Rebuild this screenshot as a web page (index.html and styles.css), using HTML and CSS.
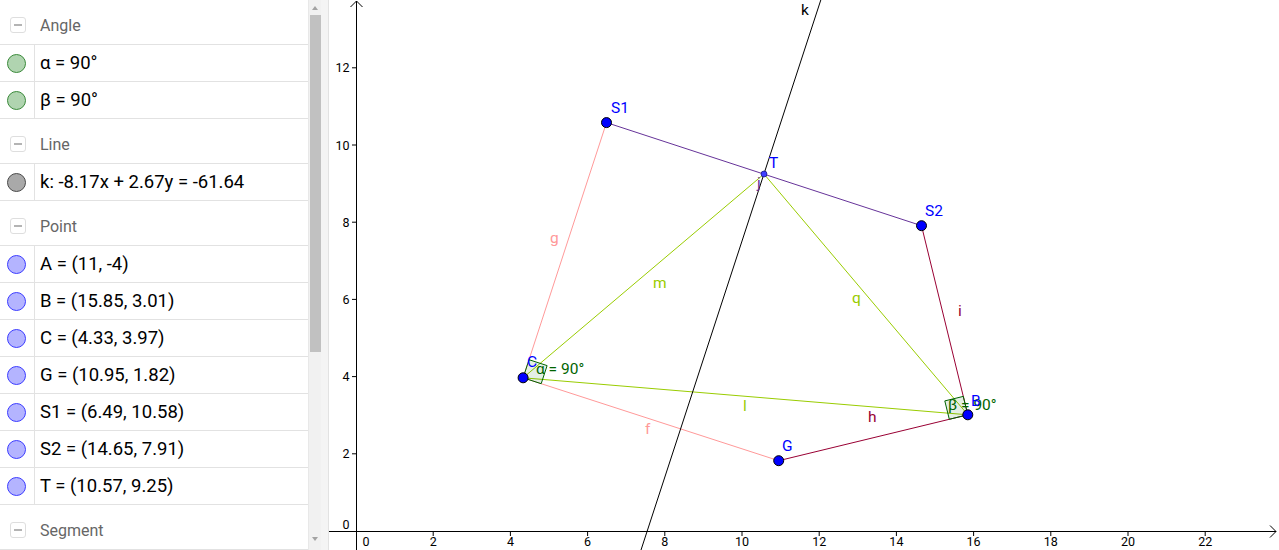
FILE: index.html
```html
<!DOCTYPE html>
<html lang="en">
<head>
<meta charset="utf-8">
<title>Algebra and Graphics</title>
<link rel="stylesheet" href="styles.css">
</head>
<body>
<div class="app">
  <div class="algebra">
    <div class="list">
      <div class="group-head"><span class="toggle"></span><span class="gtitle">Angle</span></div>
      <div class="item"><div class="marker"><span class="dot dot-green"></span></div><div class="expr">α = 90°</div></div>
      <div class="item"><div class="marker"><span class="dot dot-green"></span></div><div class="expr">β = 90°</div></div>
      <div class="group-head"><span class="toggle"></span><span class="gtitle">Line</span></div>
      <div class="item"><div class="marker"><span class="dot dot-gray"></span></div><div class="expr">k: -8.17x + 2.67y = -61.64</div></div>
      <div class="group-head"><span class="toggle"></span><span class="gtitle">Point</span></div>
      <div class="item"><div class="marker"><span class="dot dot-blue"></span></div><div class="expr">A = (11, -4)</div></div>
      <div class="item"><div class="marker"><span class="dot dot-blue"></span></div><div class="expr">B = (15.85, 3.01)</div></div>
      <div class="item"><div class="marker"><span class="dot dot-blue"></span></div><div class="expr">C = (4.33, 3.97)</div></div>
      <div class="item"><div class="marker"><span class="dot dot-blue"></span></div><div class="expr">G = (10.95, 1.82)</div></div>
      <div class="item"><div class="marker"><span class="dot dot-blue"></span></div><div class="expr">S1 = (6.49, 10.58)</div></div>
      <div class="item"><div class="marker"><span class="dot dot-blue"></span></div><div class="expr">S2 = (14.65, 7.91)</div></div>
      <div class="item"><div class="marker"><span class="dot dot-blue"></span></div><div class="expr">T = (10.57, 9.25)</div></div>
      <div class="group-head"><span class="toggle"></span><span class="gtitle">Segment</span></div>
    </div>
    <div class="scrollbar">
      <div class="sb-btn sb-btn-up"><span class="tri-up"></span></div>
      <div class="sb-track"><div class="sb-thumb"></div></div>
      <div class="sb-btn sb-btn-down"><span class="tri-down"></span></div>
    </div>
  </div>
  <div class="splitter"></div>
  <div class="graphics">
    <svg class="canvas" width="950" height="550" viewBox="329 0 950 550" xmlns="http://www.w3.org/2000/svg">
      <g class="axis">
        <line x1="329" y1="531.5" x2="1276" y2="531.5"/>
        <polyline class="arrow" points="1270,525.5 1276,531.5 1270,537.5"/>
        <line x1="356.5" y1="550" x2="356.5" y2="1"/>
        <polyline class="arrow" points="350.5,7 356.5,1 362.5,7"/>
        <line x1="433.2" y1="531" x2="433.2" y2="536"/>
        <line x1="510.4" y1="531" x2="510.4" y2="536"/>
        <line x1="587.6" y1="531" x2="587.6" y2="536"/>
        <line x1="664.8" y1="531" x2="664.8" y2="536"/>
        <line x1="742" y1="531" x2="742" y2="536"/>
        <line x1="819.2" y1="531" x2="819.2" y2="536"/>
        <line x1="896.4" y1="531" x2="896.4" y2="536"/>
        <line x1="973.6" y1="531" x2="973.6" y2="536"/>
        <line x1="1050.8" y1="531" x2="1050.8" y2="536"/>
        <line x1="1128" y1="531" x2="1128" y2="536"/>
        <line x1="1205.2" y1="531" x2="1205.2" y2="536"/>
        <line x1="352" y1="453.8" x2="357" y2="453.8"/>
        <line x1="352" y1="376.6" x2="357" y2="376.6"/>
        <line x1="352" y1="299.4" x2="357" y2="299.4"/>
        <line x1="352" y1="222.2" x2="357" y2="222.2"/>
        <line x1="352" y1="145" x2="357" y2="145"/>
        <line x1="352" y1="67.8" x2="357" y2="67.8"/>
      </g>
      <g class="ticklabels">
        <text x="362.5" y="546">0</text>
        <text class="mid" x="433.2" y="546">2</text>
        <text class="mid" x="510.4" y="546">4</text>
        <text class="mid" x="587.6" y="546">6</text>
        <text class="mid" x="664.8" y="546">8</text>
        <text class="mid" x="742" y="546">10</text>
        <text class="mid" x="819.2" y="546">12</text>
        <text class="mid" x="896.4" y="546">14</text>
        <text class="mid" x="973.6" y="546">16</text>
        <text class="mid" x="1050.8" y="546">18</text>
        <text class="mid" x="1128" y="546">20</text>
        <text class="mid" x="1205.2" y="546">22</text>
        <text class="end" x="349.5" y="528.5">0</text>
        <text class="end" x="349.5" y="458.3">2</text>
        <text class="end" x="349.5" y="381.1">4</text>
        <text class="end" x="349.5" y="303.9">6</text>
        <text class="end" x="349.5" y="226.7">8</text>
        <text class="end" x="349.5" y="149.5">10</text>
        <text class="end" x="349.5" y="72.3">12</text>
      </g>
      <line class="seg-pink" x1="523.1" y1="377.8" x2="606.5" y2="122.6"/>
      <line class="seg-pink" x1="523.1" y1="377.8" x2="778.7" y2="460.7"/>
      <line class="seg-red" x1="778.7" y1="460.7" x2="967.8" y2="414.8"/>
      <line class="seg-red" x1="967.8" y1="414.8" x2="921.5" y2="225.7"/>
      <line class="seg-purple" x1="606.5" y1="122.6" x2="921.5" y2="225.7"/>
      <line class="seg-green" x1="523.1" y1="377.8" x2="764" y2="174"/>
      <line class="seg-green" x1="764" y1="174" x2="967.8" y2="414.8"/>
      <line class="seg-green" x1="523.1" y1="377.8" x2="967.8" y2="414.8"/>
      <line class="line-k" x1="820.8" y1="0" x2="641" y2="550"/>
      <polygon class="angle" points="523.1,377.8 529,359.7 547.1,365.6 541.2,383.7"/>
      <polygon class="angle" points="967.8,414.8 963.3,396.4 944.8,400.9 949.3,419.3"/>
      <circle class="pt" cx="606.5" cy="122.6" r="5"/>
      <circle class="pt" cx="921.5" cy="225.7" r="5"/>
      <circle class="pt" cx="778.7" cy="460.7" r="5"/>
      <circle class="pt" cx="967.8" cy="414.8" r="5"/>
      <circle class="pt" cx="523.1" cy="377.8" r="5"/>
      <circle class="pt-small" cx="764" cy="174" r="3"/>
      <g class="labels">
        <text class="lbl-k" x="801" y="15">k</text>
        <text class="lbl-pt" x="611" y="113">S1</text>
        <text class="lbl-pt" x="925" y="216">S2</text>
        <text class="lbl-pt" x="782" y="451">G</text>
        <text class="lbl-pt" x="769" y="168">T</text>
        <text class="lbl-pt" x="527" y="367">C</text>
        <text class="lbl-angle" x="536" y="374">α = 90°</text>
        <text class="lbl-angle" x="948" y="410">β = 90°</text>
        <text class="lbl-pt" x="971" y="406">B</text>
        <text class="lbl-pink" x="550" y="243">g</text>
        <text class="lbl-pink" x="645" y="434">f</text>
        <text class="lbl-green" x="653" y="288">m</text>
        <text class="lbl-green" x="852" y="303">q</text>
        <text class="lbl-green" x="743" y="411">l</text>
        <text class="lbl-red" x="958" y="316">i</text>
        <text class="lbl-red" x="868" y="422">h</text>
        <text class="lbl-purple" x="757" y="188">j</text>
      </g>
    </svg>
  </div>
</div>
</body>
</html>
```

FILE: styles.css
```css
html, body {
  margin: 0;
  padding: 0;
  background: #ffffff;
}

body {
  font-family: Roboto, "Noto Sans", "Liberation Sans", sans-serif;
  overflow: hidden;
}

.app {
  display: flex;
  width: 1279px;
  height: 550px;
}

.algebra {
  display: flex;
  width: 321px;
  height: 550px;
  overflow: hidden;
  background: #ffffff;
}

.list {
  width: 308px;
  height: 550px;
  overflow: hidden;
}

.group-head {
  box-sizing: border-box;
  height: 45px;
  padding-top: 6px;
  border-bottom: 1px solid #e2e2e2;
  display: flex;
  align-items: center;
}

.toggle {
  position: relative;
  box-sizing: border-box;
  width: 16px;
  height: 16px;
  margin-left: 10px;
  border: 1px solid #dedede;
  border-radius: 3px;
}

.toggle::after {
  content: "";
  position: absolute;
  left: 3px;
  top: 6px;
  width: 8px;
  height: 1.5px;
  background: #b4b4b4;
}

.gtitle {
  margin-left: 14px;
  font-size: 16px;
  color: #666666;
}

.item {
  box-sizing: border-box;
  height: 37px;
  border-bottom: 1px solid #e2e2e2;
  display: flex;
}

.marker {
  box-sizing: border-box;
  width: 35px;
  border-right: 1px solid #e2e2e2;
  display: flex;
  align-items: center;
}

.dot {
  box-sizing: border-box;
  width: 19px;
  height: 19px;
  margin-left: 7px;
  border-radius: 50%;
  border: 1px solid #333;
}

.dot-green {
  background: #b0d4b0;
  border-color: #3a8a3a;
}

.dot-gray {
  background: #a9a9a9;
  border-color: #4a4a4a;
}

.dot-blue {
  background: #b4b4ff;
  border-color: #3c3cff;
}

.expr {
  padding-left: 5px;
  display: flex;
  align-items: center;
  font-size: 18.5px;
  color: #000000;
  white-space: nowrap;
}

.scrollbar {
  width: 13px;
  height: 550px;
  display: flex;
  flex-direction: column;
  background: #f1f1f1;
  border-left: 1px solid #e8e8e8;
  box-sizing: border-box;
}

.sb-btn {
  height: 15px;
  display: flex;
  justify-content: center;
}

.sb-btn-up {
  align-items: flex-start;
  padding-top: 6px;
  box-sizing: border-box;
}

.sb-btn-down {
  align-items: flex-start;
  padding-top: 2px;
  box-sizing: border-box;
}

.tri-up {
  width: 0;
  height: 0;
  border-left: 3.5px solid transparent;
  border-right: 3.5px solid transparent;
  border-bottom: 4px solid #a3a3a3;
}

.tri-down {
  width: 0;
  height: 0;
  border-left: 3.5px solid transparent;
  border-right: 3.5px solid transparent;
  border-top: 4px solid #a3a3a3;
}

.sb-track {
  flex: 1;
  display: flex;
  flex-direction: column;
  align-items: center;
}

.sb-thumb {
  width: 11px;
  height: 337px;
  background: #c1c1c1;
}

.splitter {
  box-sizing: border-box;
  width: 8px;
  height: 550px;
  background: #f4f4f4;
  border-right: 1px solid #e2e2e2;
}

.graphics {
  width: 950px;
  height: 550px;
  overflow: hidden;
  background: #ffffff;
}

.canvas {
  display: block;
}

.axis line,
.axis polyline {
  stroke: #000000;
  stroke-width: 1;
  fill: none;
}

.ticklabels text {
  font-family: Roboto, "Noto Sans", sans-serif;
  font-size: 12.5px;
  fill: #000000;
}

.ticklabels .mid {
  text-anchor: middle;
}

.ticklabels .end {
  text-anchor: end;
}

.seg-pink {
  stroke: #ff9999;
  stroke-width: 1;
}

.seg-red {
  stroke: #990033;
  stroke-width: 1;
}

.seg-purple {
  stroke: #663399;
  stroke-width: 1;
}

.seg-green {
  stroke: #99cc00;
  stroke-width: 1;
}

.line-k {
  stroke: #000000;
  stroke-width: 1;
}

.angle {
  fill: rgba(0, 100, 0, 0.1);
  stroke: #006400;
  stroke-width: 1;
}

.pt {
  fill: #0000ff;
  stroke: #000000;
  stroke-width: 1;
}

.pt-small {
  fill: #4040ff;
  stroke: #000066;
  stroke-width: 0.6;
}

.labels text {
  font-family: Roboto, "Noto Sans", sans-serif;
  font-size: 15.5px;
}

.lbl-k {
  fill: #000000;
}

.lbl-pt {
  fill: #0000ff;
}

.lbl-angle {
  fill: #006400;
}

.lbl-pink {
  fill: #ff9999;
}

.lbl-green {
  fill: #99cc00;
}

.lbl-red {
  fill: #990033;
}

.lbl-purple {
  fill: #663399;
}
```
